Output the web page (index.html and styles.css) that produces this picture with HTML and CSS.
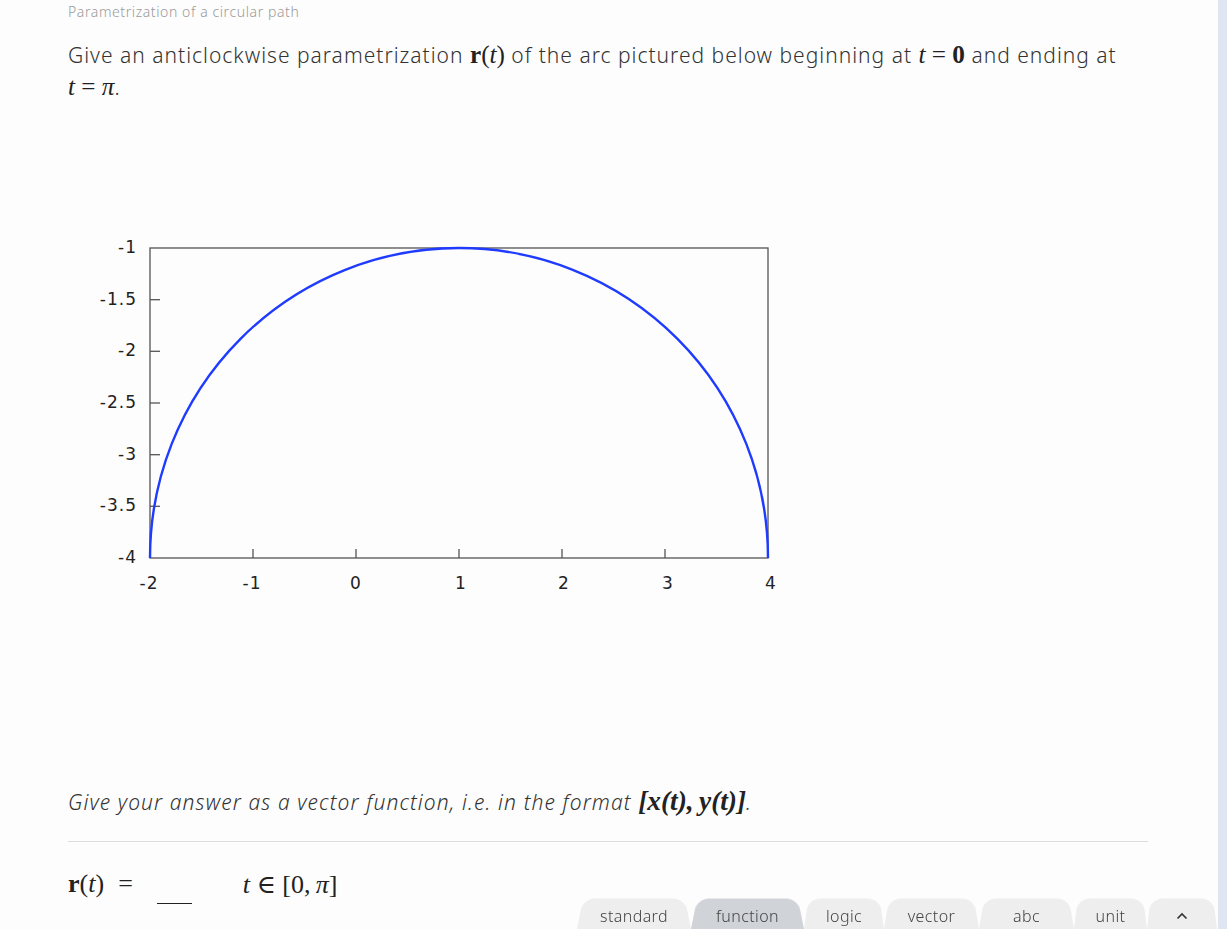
FILE: index.html
```html
<!DOCTYPE HTML>
<html>
<head>
<meta charset="utf-8">
<title>Parametrization of a circular path</title>
<link rel="stylesheet" href="styles.css">
</head>
<body>
	<div class="page">
		<div class="main">
			<div class="title">Parametrization of a circular path</div>
			<p class="question">Give an anticlockwise parametrization <span class="math"><b>r</b>(<i>t</i>)</span> of the arc pictured below beginning at <span class="math"><i>t</i> = <b>0</b></span> and ending at <span class="math"><i>t</i> = <i>π</i></span>.</p>
			<svg class="plot" width="740" height="660" viewBox="68 110 740 660">
				<rect x="150" y="245" width="618" height="310" fill="none" stroke="#555" stroke-width="1.3"/>
				<g stroke="#555" stroke-width="1.3">
					<line x1="150" y1="296.7" x2="160" y2="296.7"/>
					<line x1="150" y1="348.3" x2="160" y2="348.3"/>
					<line x1="150" y1="400" x2="160" y2="400"/>
					<line x1="150" y1="451.7" x2="160" y2="451.7"/>
					<line x1="150" y1="503.3" x2="160" y2="503.3"/>
					<line x1="253" y1="555" x2="253" y2="546"/>
					<line x1="356" y1="555" x2="356" y2="546"/>
					<line x1="459" y1="555" x2="459" y2="546"/>
					<line x1="562" y1="555" x2="562" y2="546"/>
					<line x1="665" y1="555" x2="665" y2="546"/>
				</g>
				<g class="ylab" text-anchor="end">
					<text x="137" y="250">-1</text>
					<text x="137" y="302">-1.5</text>
					<text x="137" y="353">-2</text>
					<text x="137" y="405">-2.5</text>
					<text x="137" y="457">-3</text>
					<text x="137" y="508">-3.5</text>
					<text x="137" y="560">-4</text>
				</g>
				<g class="xlab" text-anchor="middle">
					<text x="149" y="586">-2</text>
					<text x="252" y="586">-1</text>
					<text x="356" y="586">0</text>
					<text x="461" y="586">1</text>
					<text x="564" y="586">2</text>
					<text x="668" y="586">3</text>
					<text x="771" y="586">4</text>
				</g>
				<path d="M768,555 A309,310 0 0 0 150,555" fill="none" stroke="#1f3bff" stroke-width="2.4"/>
			</svg>
			<p class="hint">Give your answer as a vector function, i.e. in the format <span class="math vec"><b>[<i>x</i>(<i>t</i>),&thinsp;<i>y</i>(<i>t</i>)]</b></span>.</p>
			<hr class="rule">
			<div class="answer">
				<span class="math big"><b>r</b>(<i>t</i>)<span class="eq">=</span></span>
				<span class="blank"></span>
				<span class="math big"><i>t</i> ∈ [0,&thinsp;<i>π</i>]</span>
			</div>
		</div>
		<div class="side"></div>
	</div>
	<div class="keys">
		<div class="tab">standard</div>
		<div class="tab on">function</div>
		<div class="tab">logic</div>
		<div class="tab">vector</div>
		<div class="tab">abc</div>
		<div class="tab">unit</div>
		<div class="tab"><svg width="12" height="8" viewBox="0 0 12 8"><path d="M1.5,6.5 L6,2 L10.5,6.5" fill="none" stroke="#333" stroke-width="1.6"/></svg></div>
	</div>
</body>
</html>
```

FILE: styles.css
```css
html, body {
 margin: 0;
 padding: 0;
 height: 100%;
}
body {
 font-family: "Noto Sans", "Open Sans", sans-serif;
 color: #333;
 background: #fdfdfd;
 overflow: hidden;
}
.page {
 display: grid;
 grid-template-columns: 1218px 9px;
 height: 100%;
}
.side { background: #e0e6f1; }
.main { padding-left: 68px; width: 1080px; }
.title {
 padding-top: 3px;
 font-size: 14px;
 line-height: 18px;
 letter-spacing: 0.6px;
 color: #9a9a9a;
 font-weight: 300;
}
.question {
 margin: 18px 0 0;
 font-size: 21px;
 line-height: 32px;
 letter-spacing: 1px;
 font-weight: 300;
}
.math {
 font-family: "Liberation Serif", "DejaVu Serif", serif;
 font-size: 1.2em;
 letter-spacing: 0;
 white-space: nowrap;
 color: #222;
}
.math b { font-weight: bold; }
.math.vec { font-size: 1.3em; }
.plot { display: block; margin-top: 10px; }
.plot text {
 font-family: "DejaVu Sans", sans-serif;
 font-size: 17px;
 letter-spacing: 1px;
 fill: #222;
}
.hint {
 margin: 13px 0 0;
 font-size: 21px;
 line-height: 30px;
 letter-spacing: 1.1px;
 font-style: italic;
 font-weight: 300;
}
.rule {
 margin: 24px 0 0;
 border: 0;
 border-top: 1px solid #ddd;
}
.answer {
 display: flex;
 align-items: center;
 height: 40px;
 margin-top: 22px;
}
.answer .big { font-size: 26px; }
.eq { margin-left: 14px; }
.blank {
 width: 35px;
 height: 1px;
 background: #222;
 margin: 38px 51px 0 24px;
}
.keys {
 position: fixed;
 left: 577px;
 bottom: 0;
 display: grid;
 grid-template-columns: 114px 113px 80px 95px 95px 73px 70px;
 height: 35px;
}
.tab {
 position: relative;
 display: flex;
 align-items: center;
 justify-content: center;
 padding-top: 8px;
 font-size: 16px;
 font-weight: 300;
 letter-spacing: 0.4px;
 color: #444;
}
.tab::before {
 content: "";
 position: absolute;
 top: 0;
 left: 0;
 right: 0;
 bottom: 0;
 z-index: -1;
 background: #eeeeee;
 border-radius: 14px 14px 0 0;
 transform-origin: bottom;
 transform: perspective(60px) rotateX(12deg);
}
.tab.on::before { background: #d0d3d8; }
```
